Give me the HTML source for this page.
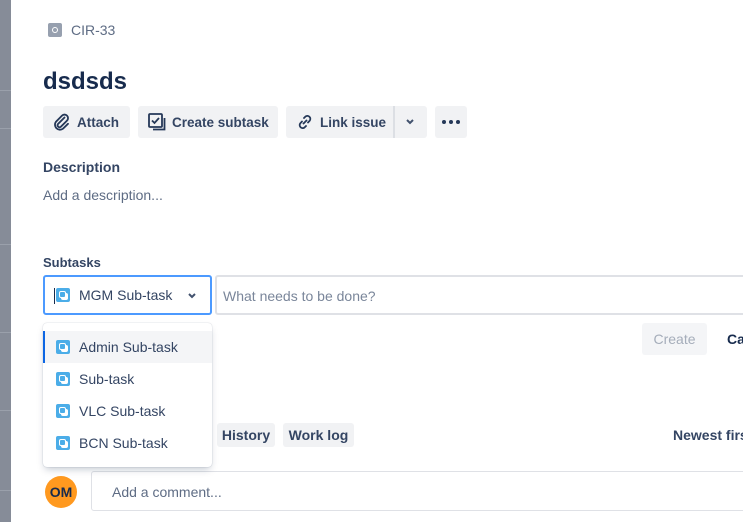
<!DOCTYPE html>
<html><head><meta charset="utf-8"><style>
*{box-sizing:border-box;margin:0;padding:0}
body{width:743px;height:522px;overflow:hidden;background:#fff;font-family:"Liberation Sans",sans-serif;color:#172b4d;position:relative}
.strip{position:absolute;left:0;top:0;width:11px;height:522px;background:#868c98;overflow:hidden}
.strip div{position:absolute;left:0;width:11px;height:1px;background:#9aa0ab}
.abs{position:absolute;white-space:nowrap}
.btn{position:absolute;top:106px;height:32px;background:#f1f2f4;border-radius:3px;font-size:13.5px;font-weight:bold;color:#42526e;display:flex;align-items:center;white-space:nowrap}
.btn span{color:#344563}
.ico{width:14px;height:14px;border-radius:2px;background:#4bade8;display:inline-block;position:relative}
.ico:after{content:"";position:absolute;left:3px;top:3px;width:7px;height:7px;border:1.5px solid #fff;border-radius:2px;box-sizing:border-box;background:#4bade8}
.ico:before{content:"";position:absolute;left:5px;top:5px;width:7px;height:7px;background:#fff;border-radius:2px}
.item{position:absolute;left:43px;width:169px;height:32px;display:flex;align-items:center;font-size:14px;color:#344563}
.item .ico{margin-left:13px;margin-right:9px}
</style></head><body>
<div class="strip"><div style="top:90px"></div><div style="top:128px"></div><div style="top:244px"></div><div style="top:332px"></div><div style="top:410px"></div><div style="top:490px"></div></div>

<div class="abs" style="left:48px;top:23px;width:14px;height:14px;background:#97a0af;border-radius:2px"><div style="position:absolute;left:4px;top:4px;width:6px;height:6px;border:1.5px solid #fff;border-radius:50%"></div></div>
<div class="abs" style="left:71px;top:22px;font-size:14px;color:#5e6c84">CIR-33</div>
<div class="abs" style="left:43px;top:68px;font-size:24px;font-weight:bold;color:#172b4d">dsdsds</div>

<div class="btn" style="left:43px;width:87px;padding-left:10px">
<svg width="18" height="18" viewBox="0 0 18 18"><path d="M11.5 4.5 L5 11 a2 2 0 0 0 2.8 2.8 L14 7.6 a3.5 3.5 0 0 0-5-5 L3 8.7 a5 5 0 0 0 7 7 L15 10.8" fill="none" stroke="#253858" stroke-width="1.8" stroke-linecap="round"/></svg><span style="margin-left:6px">Attach</span></div>
<div class="btn" style="left:138px;width:140px;padding-left:10px">
<svg width="18" height="18" viewBox="0 0 18 18"><rect x="1" y="1" width="13" height="13" fill="none" stroke="#253858" stroke-width="1.8" rx="1"/><path d="M4 7.5l2.5 2.5 4.5-5" fill="none" stroke="#253858" stroke-width="1.8"/><path d="M16.5 5v11.5H5" fill="none" stroke="#253858" stroke-width="1.8"/></svg><span style="margin-left:6px">Create subtask</span></div>
<div class="btn" style="left:286px;width:141px;padding-left:10px">
<svg width="18" height="18" viewBox="0 0 18 18"><path d="M7.5 10.5l3-3M8 5l1.5-1.5a3 3 0 0 1 4.2 4.2L12 9.5M10 13l-1.5 1.5a3 3 0 0 1-4.2-4.2L6 8.5" fill="none" stroke="#253858" stroke-width="1.8" stroke-linecap="round"/></svg><span style="margin-left:6px">Link issue</span>
<div style="position:absolute;left:107px;top:0;width:2px;height:32px;background:#dcdfe4"></div>
<svg style="position:absolute;left:119px;top:12px" width="10" height="8" viewBox="0 0 10 8"><path d="M2 2l3 3 3-3" fill="none" stroke="#42526e" stroke-width="2"/></svg></div>
<div class="btn" style="left:435px;width:32px;justify-content:center;gap:3px"><i style="width:4px;height:4px;background:#253858;border-radius:50%"></i><i style="width:4px;height:4px;background:#253858;border-radius:50%"></i><i style="width:4px;height:4px;background:#253858;border-radius:50%"></i></div>

<div class="abs" style="left:43px;top:159px;font-size:14px;font-weight:bold;color:#344563">Description</div>
<div class="abs" style="left:43px;top:187px;font-size:14px;color:#5e6c84">Add a description...</div>

<div class="abs" style="left:43px;top:255px;font-size:13px;font-weight:bold;color:#344563">Subtasks</div>
<div class="abs" style="left:43px;top:275px;width:169px;height:40px;border:2px solid #4c9aff;border-radius:3px;display:flex;align-items:center;font-size:14px;color:#344563">
<div style="position:absolute;left:9px;top:11px;width:1px;height:16px;background:#172b4d"></div>
<span class="ico" style="margin-left:11px;margin-right:9px"></span>MGM Sub-task
<svg style="position:absolute;left:142px;top:15px" width="10" height="8" viewBox="0 0 10 8"><path d="M2 2l3 3 3-3" fill="none" stroke="#42526e" stroke-width="2"/></svg></div>
<div class="abs" style="left:215px;top:275px;width:540px;height:40px;border:2px solid #dfe1e6;border-radius:3px;font-size:14px;color:#7a869a;padding:11px 0 0 6px">What needs to be done?</div>

<div class="abs" style="left:642px;top:323px;width:65px;height:32px;background:#f4f5f7;border-radius:3px;font-size:14px;color:#a5adba;text-align:center;line-height:32px">Create</div>
<div class="abs" style="left:727px;top:331px;font-size:14px;font-weight:bold;color:#172b4d">Ca</div>

<div class="abs" style="left:217px;top:423px;width:58px;height:24px;background:#f1f2f4;border-radius:3px;font-size:14px;font-weight:bold;color:#344563;line-height:24px;text-align:center">History</div>
<div class="abs" style="left:283px;top:423px;width:71px;height:24px;background:#f1f2f4;border-radius:3px;font-size:14px;font-weight:bold;color:#344563;line-height:24px;text-align:center">Work log</div>
<div class="abs" style="left:673px;top:427px;font-size:14px;font-weight:bold;color:#344563">Newest first</div>

<div class="abs" style="left:45px;top:476px;width:32px;height:32px;border-radius:50%;background:#ff991f;font-size:14px;font-weight:bold;color:#172b4d;line-height:32px;text-align:center">OM</div>
<div class="abs" style="left:91px;top:471px;width:660px;height:40px;border:1px solid #dfe1e6;border-radius:3px;font-size:14px;color:#5e6c84;padding:12px 0 0 20px">Add a comment...</div>

<div class="abs" style="left:43px;top:323px;width:169px;height:144px;background:#fff;border-radius:4px;box-shadow:0 4px 8px -2px rgba(9,30,66,.25),0 0 1px rgba(9,30,66,.31)"></div>
<div class="item" style="top:331px;background:#f4f5f7;border-left:2px solid #0c66e4"><span class="ico" style="margin-left:11px"></span>Admin Sub-task</div>
<div class="item" style="top:363px"><span class="ico"></span>Sub-task</div>
<div class="item" style="top:395px"><span class="ico"></span>VLC Sub-task</div>
<div class="item" style="top:427px"><span class="ico"></span>BCN Sub-task</div>
</body></html>
